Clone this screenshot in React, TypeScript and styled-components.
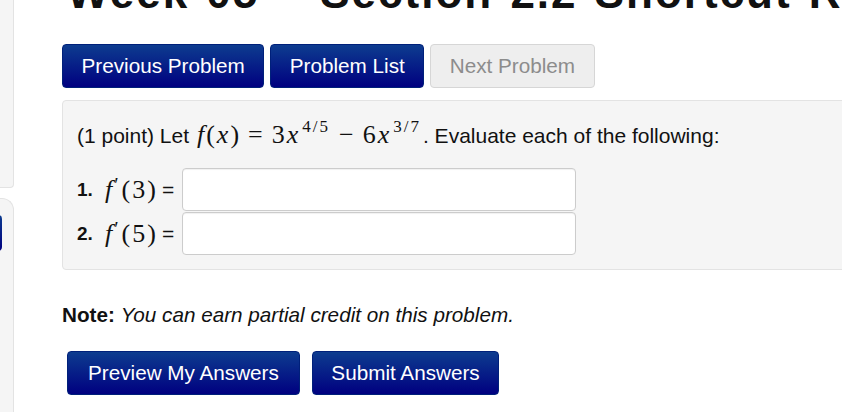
import React from "react";
import styled, { createGlobalStyle, css } from "styled-components";

const Global = createGlobalStyle`
  html, body { margin: 0; padding: 0; background: #ffffff; overflow: hidden; }
  body { font-family: "Liberation Sans", Arial, sans-serif; color: #111; }
  * { box-sizing: border-box; }
`;

const Page = styled.div`
  display: flex;
  width: 842px;
  height: 412px;
  overflow: hidden;
`;

const Sidebar = styled.div`
  flex: 0 0 14px;
  width: 14px;
  min-width: 0;
  overflow: hidden;
  display: flex;
  flex-direction: column;
  gap: 10px;
`;

const SidePanel = styled.div<{ $top?: boolean }>`
  background: #f5f5f5;
  border: 1px solid #e3e3e3;
  border-left: none;
  overflow: hidden;
  display: flex;
  justify-content: flex-end;
  align-items: flex-start;
  ${(p) =>
    p.$top
      ? css`
          height: 188px;
          border-top: none;
          border-bottom-right-radius: 4px;
        `
      : css`
          flex: 1;
          border-bottom: none;
          border-top-right-radius: 12px;
          padding-top: 16px;
        `}
`;

const SideButton = styled.div`
  flex: 0 0 60px;
  height: 36px;
  margin-right: 11px;
  border-radius: 4px;
  background: linear-gradient(to bottom, #0d3c8f, #000080);
`;

const Main = styled.div`
  flex: 1;
  padding-left: 48px;
  min-width: 0;
`;

const Title = styled.h1`
  margin: -29px 0 29px 5px;
  font-size: 44px;
  line-height: 44px;
  font-weight: bold;
  white-space: nowrap;
  letter-spacing: 2px;
  word-spacing: 3px;
  color: #111;
`;

const ButtonRow = styled.div<{ $indent?: number; $gap: number }>`
  display: flex;
  gap: ${(p) => p.$gap}px;
  margin-left: ${(p) => p.$indent ?? 0}px;
`;

const NavButton = styled.button<{ $disabled?: boolean; $wide?: boolean }>`
  height: 44px;
  padding: 0 ${(p) => (p.$wide ? 20 : 18.5)}px;
  font-family: "Liberation Sans", Arial, sans-serif;
  font-size: 20.7px;
  border-radius: 4px;
  border: 1px solid #00207a;
  color: #ffffff;
  background: linear-gradient(to bottom, #0d3c8f 0%, #000080 100%);
  white-space: nowrap;
  cursor: pointer;
  ${(p) =>
    p.$disabled &&
    css`
      background: #eeeeee;
      border-color: #d6d6d6;
      color: #8c8c8c;
      cursor: default;
    `}
`;

const ProblemBox = styled.div`
  margin-top: 12px;
  width: 820px;
  background: #f5f5f5;
  border: 1px solid #e3e3e3;
  border-radius: 4px;
  padding: 19px 14px 14px 14px;
`;

const Statement = styled.div`
  font-size: 21px;
  line-height: 29px;
  white-space: nowrap;
  margin-bottom: 16px;
`;

const MathSpan = styled.span`
  font-family: "Liberation Serif", "Times New Roman", serif;
  font-size: 26px;
  margin: 0 2px 0 0;
  white-space: nowrap;
`;

const V = styled.span`
  font-style: italic;
  padding: 0 2px;
`;

const Op = styled.span`
  margin: 0 9px;
`;

const Sup = styled.sup`
  font-size: 17px;
  vertical-align: 0;
  position: relative;
  top: -11px;
  margin-left: 2px;
  letter-spacing: 2px;
`;

const Rows = styled.div`
  display: flex;
  flex-direction: column;
  gap: 1px;
`;

const Row = styled.div`
  display: flex;
  align-items: center;
  font-size: 21px;
`;

const Num = styled.span`
  font-weight: bold;
  font-size: 19px;
  width: 26px;
`;

const Paren = styled.span`
  letter-spacing: 2px;
`;

const Eq = styled.span`
  margin: 0 8px 0 2px;
`;

const AnswerInput = styled.input`
  width: 394px;
  height: 43px;
  border: 1px solid #cccccc;
  border-radius: 4px;
  background: #ffffff;
  box-shadow: inset 0 1px 1px rgba(0, 0, 0, 0.06);
  font-size: 18px;
  padding: 0 8px;
  outline: none;
`;

const Note = styled.p`
  margin: 30px 0 22px 0;
  font-size: 20.7px;
  line-height: 29px;
  white-space: nowrap;
  em { font-style: italic; }
`;

const Prime = styled.span`
  font-size: 20px;
  position: relative;
  top: -6px;
  margin: 0 3px 0 0;
`;

const Fp = ({ n }: { n: string }) => (
  <MathSpan>
    <V>f</V>
    <Prime>′</Prime>
    <Paren>({n})</Paren>
  </MathSpan>
);

export default function App() {
  return (
    <>
      <Global />
      <Page>
        <Sidebar>
          <SidePanel $top />
          <SidePanel>
            <SideButton />
          </SidePanel>
        </Sidebar>
        <Main>
          <Title>Week 05 – Section 2.2 Shortcut Rules</Title>
          <ButtonRow $gap={6}>
            <NavButton>Previous Problem</NavButton>
            <NavButton>Problem List</NavButton>
            <NavButton $disabled>Next Problem</NavButton>
          </ButtonRow>
          <ProblemBox>
            <Statement>
              (1 point) Let{" "}
              <MathSpan>
                <V>f</V>(<V>x</V>)<Op>=</Op>3<V>x</V>
                <Sup>4/5</Sup>
                <Op>−</Op>6<V>x</V>
                <Sup>3/7</Sup>
              </MathSpan>
              . Evaluate each of the following:
            </Statement>
            <Rows>
              <Row>
                <Num>1.</Num>
                <Fp n="3" />
                <Eq>=</Eq>
                <AnswerInput aria-label="answer 1" />
              </Row>
              <Row>
                <Num>2.</Num>
                <Fp n="5" />
                <Eq>=</Eq>
                <AnswerInput aria-label="answer 2" />
              </Row>
            </Rows>
          </ProblemBox>
          <Note>
            <b>Note:</b> <em>You can earn partial credit on this problem.</em>
          </Note>
          <ButtonRow $indent={5} $gap={12}>
            <NavButton $wide>Preview My Answers</NavButton>
            <NavButton>Submit Answers</NavButton>
          </ButtonRow>
        </Main>
      </Page>
    </>
  );
}
